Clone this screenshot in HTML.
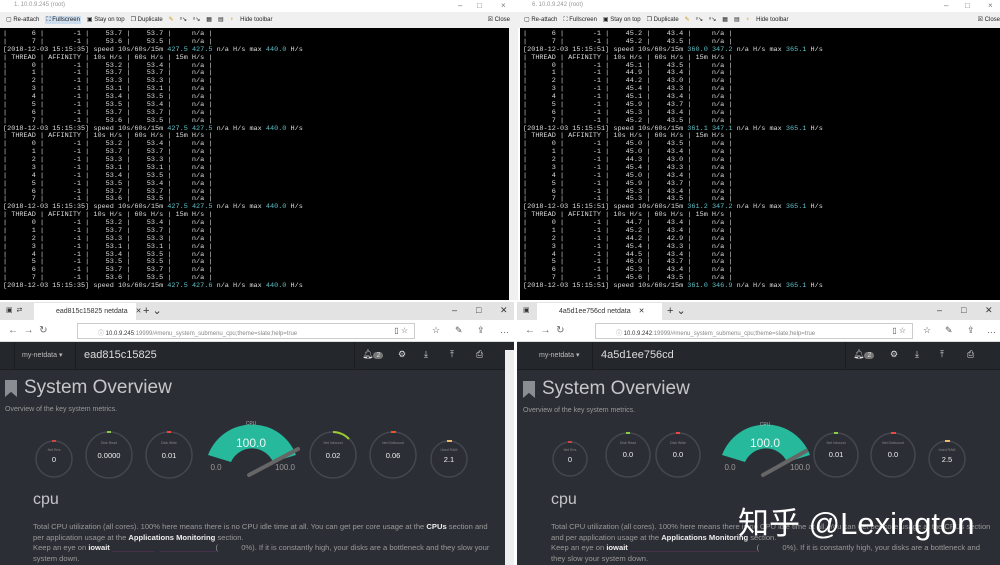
<!DOCTYPE html>
<html><head><meta charset="utf-8">
<style>
*{margin:0;padding:0;box-sizing:border-box}
body{width:1000px;height:565px;overflow:hidden;background:#fff;position:relative;font-family:"Liberation Sans",sans-serif}
.abs{position:absolute}
.title{height:12px;background:#fff;font-size:6px;color:#999;padding:2px 0 0 14px;position:relative;white-space:nowrap}
.wc{position:absolute;top:1px;font-size:8px;color:#777;white-space:nowrap}
.tb{height:16px;background:#f0f0f0;font-size:6px;color:#222;white-space:nowrap;padding-top:4px;position:relative}
.tb span{margin-left:6px}
.term{background:#000;overflow:hidden}
.term pre{font-family:"Liberation Mono",monospace;font-size:6.85px;line-height:7.875px;color:#dcdcdc;padding:3px 0 0 3px}
.c{color:#5fc0c8}
.sb{background:#f0f0f0}
.tabs{height:18px;background:#e3e3e3;font-size:7px;color:#333;white-space:nowrap}
.tab{position:absolute;top:1px;height:17px;background:#fff;padding:4px 0 0 22px;white-space:nowrap}
.addr{height:22px;background:#fff;border-bottom:1px solid #ddd;font-size:6px;color:#888;white-space:nowrap}
.url{position:absolute;top:3px;height:16px;border:1px solid #ccc;padding:4px 0 0 20px;white-space:nowrap}
.url b{color:#333;font-weight:normal}
.nav{height:28px;background:#24272c;border-bottom:1px solid #1a1c20;color:#ddd;white-space:nowrap}
h1{font-weight:normal;color:#c4c6ca;font-size:19px;position:absolute;white-space:nowrap}
.bm{position:absolute;width:12px;height:17px;background:#8a8d92;clip-path:polygon(0 0,100% 0,100% 100%,50% 70%,0 100%)}
.sub{position:absolute;font-size:7px;color:#999;white-space:nowrap}
.cpu{position:absolute;font-size:16px;color:#c4c6ca}
.p{position:absolute;font-size:7.6px;line-height:10.5px;color:#999}
.p b{color:#eee}
.wm{position:absolute;left:738px;top:498px;font-size:31px;color:#fff;font-family:"Liberation Sans","Noto Sans CJK SC",sans-serif;white-space:nowrap}
.ic{position:absolute;font-size:9px;color:#ddd}
</style></head><body>

<!-- LEFT TERMINAL -->
<div class="abs" style="left:0;top:0;width:518px;height:302px;background:#fff">
 <div class="title">1. 10.0.9.245 (root)<span class="wc" style="left:458px">–</span><span class="wc" style="left:477px">□</span><span class="wc" style="left:501px">×</span></div>
 <div class="tb"><span>▢ Re-attach</span><span style="background:#cde;padding:1px">⛶ Fullscreen</span><span>▣ Stay on top</span><span>❐ Duplicate</span><span style="color:#c90">✎</span><span>ᵒ↘</span><span>ᵒ↘</span><span>▦</span><span>▤</span><span style="color:#c90">♆</span><span>Hide toolbar</span><span style="position:absolute;right:8px;top:4px">☒ Close</span></div>
 <div class="term abs" style="left:0;top:28px;width:509px;height:272px"><pre>|      6 |       -1 |    53.7 |    53.7 |     n/a |
|      7 |       -1 |    53.6 |    53.5 |     n/a |
[2018-12-03 15:15:35] speed 10s/60s/15m <span class="c">427.5</span> <span class="c">427.5</span> n/a H/s max <span class="c">440.0</span> H/s
| THREAD | AFFINITY | 10s H/s | 60s H/s | 15m H/s |
|      0 |       -1 |    53.2 |    53.4 |     n/a |
|      1 |       -1 |    53.7 |    53.7 |     n/a |
|      2 |       -1 |    53.3 |    53.3 |     n/a |
|      3 |       -1 |    53.1 |    53.1 |     n/a |
|      4 |       -1 |    53.4 |    53.5 |     n/a |
|      5 |       -1 |    53.5 |    53.4 |     n/a |
|      6 |       -1 |    53.7 |    53.7 |     n/a |
|      7 |       -1 |    53.6 |    53.5 |     n/a |
[2018-12-03 15:15:35] speed 10s/60s/15m <span class="c">427.5</span> <span class="c">427.5</span> n/a H/s max <span class="c">440.0</span> H/s
| THREAD | AFFINITY | 10s H/s | 60s H/s | 15m H/s |
|      0 |       -1 |    53.2 |    53.4 |     n/a |
|      1 |       -1 |    53.7 |    53.7 |     n/a |
|      2 |       -1 |    53.3 |    53.3 |     n/a |
|      3 |       -1 |    53.1 |    53.1 |     n/a |
|      4 |       -1 |    53.4 |    53.5 |     n/a |
|      5 |       -1 |    53.5 |    53.4 |     n/a |
|      6 |       -1 |    53.7 |    53.7 |     n/a |
|      7 |       -1 |    53.6 |    53.5 |     n/a |
[2018-12-03 15:15:35] speed 10s/60s/15m <span class="c">427.5</span> <span class="c">427.5</span> n/a H/s max <span class="c">440.0</span> H/s
| THREAD | AFFINITY | 10s H/s | 60s H/s | 15m H/s |
|      0 |       -1 |    53.2 |    53.4 |     n/a |
|      1 |       -1 |    53.7 |    53.7 |     n/a |
|      2 |       -1 |    53.3 |    53.3 |     n/a |
|      3 |       -1 |    53.1 |    53.1 |     n/a |
|      4 |       -1 |    53.4 |    53.5 |     n/a |
|      5 |       -1 |    53.5 |    53.5 |     n/a |
|      6 |       -1 |    53.7 |    53.7 |     n/a |
|      7 |       -1 |    53.6 |    53.5 |     n/a |
[2018-12-03 15:15:35] speed 10s/60s/15m <span class="c">427.5</span> <span class="c">427.6</span> n/a H/s max <span class="c">440.0</span> H/s</pre></div>
 <div class="sb abs" style="left:509px;top:28px;width:9px;height:272px"></div>
</div>

<!-- RIGHT TERMINAL -->
<div class="abs" style="left:518px;top:0;width:482px;height:302px;background:#fff">
 <div class="title">6. 10.0.9.242 (root)<span class="wc" style="left:426px">–</span><span class="wc" style="left:447px">□</span><span class="wc" style="left:470px">×</span></div>
 <div class="tb"><span>▢ Re-attach</span><span>⛶ Fullscreen</span><span>▣ Stay on top</span><span>❐ Duplicate</span><span style="color:#c90">✎</span><span>ᵒ↘</span><span>ᵒ↘</span><span>▦</span><span>▤</span><span style="color:#c90">♆</span><span>Hide toolbar</span><span style="position:absolute;right:0;top:4px">☒ Close</span></div>
 <div class="term abs" style="left:2px;top:28px;width:480px;height:272px"><pre>|      6 |       -1 |    45.2 |    43.4 |     n/a |
|      7 |       -1 |    45.2 |    43.5 |     n/a |
[2018-12-03 15:15:51] speed 10s/60s/15m <span class="c">360.0</span> <span class="c">347.2</span> n/a H/s max <span class="c">365.1</span> H/s
| THREAD | AFFINITY | 10s H/s | 60s H/s | 15m H/s |
|      0 |       -1 |    45.1 |    43.5 |     n/a |
|      1 |       -1 |    44.9 |    43.4 |     n/a |
|      2 |       -1 |    44.2 |    43.0 |     n/a |
|      3 |       -1 |    45.4 |    43.3 |     n/a |
|      4 |       -1 |    45.1 |    43.4 |     n/a |
|      5 |       -1 |    45.9 |    43.7 |     n/a |
|      6 |       -1 |    45.3 |    43.4 |     n/a |
|      7 |       -1 |    45.2 |    43.5 |     n/a |
[2018-12-03 15:15:51] speed 10s/60s/15m <span class="c">361.1</span> <span class="c">347.1</span> n/a H/s max <span class="c">365.1</span> H/s
| THREAD | AFFINITY | 10s H/s | 60s H/s | 15m H/s |
|      0 |       -1 |    45.0 |    43.5 |     n/a |
|      1 |       -1 |    45.0 |    43.4 |     n/a |
|      2 |       -1 |    44.3 |    43.0 |     n/a |
|      3 |       -1 |    45.4 |    43.3 |     n/a |
|      4 |       -1 |    45.0 |    43.4 |     n/a |
|      5 |       -1 |    45.9 |    43.7 |     n/a |
|      6 |       -1 |    45.3 |    43.4 |     n/a |
|      7 |       -1 |    45.3 |    43.5 |     n/a |
[2018-12-03 15:15:51] speed 10s/60s/15m <span class="c">361.2</span> <span class="c">347.2</span> n/a H/s max <span class="c">365.1</span> H/s
| THREAD | AFFINITY | 10s H/s | 60s H/s | 15m H/s |
|      0 |       -1 |    44.7 |    43.4 |     n/a |
|      1 |       -1 |    45.2 |    43.4 |     n/a |
|      2 |       -1 |    44.2 |    42.9 |     n/a |
|      3 |       -1 |    45.4 |    43.3 |     n/a |
|      4 |       -1 |    44.5 |    43.4 |     n/a |
|      5 |       -1 |    46.0 |    43.7 |     n/a |
|      6 |       -1 |    45.3 |    43.4 |     n/a |
|      7 |       -1 |    45.6 |    43.5 |     n/a |
[2018-12-03 15:15:51] speed 10s/60s/15m <span class="c">361.0</span> <span class="c">346.9</span> n/a H/s max <span class="c">365.1</span> H/s</pre></div>
</div>

<!-- LEFT BROWSER -->
<div class="abs" style="left:0;top:302px;width:514px;height:263px;background:#2b2e34;overflow:hidden">
 <div class="tabs" style="position:relative"><span class="abs" style="left:6px;top:4px">▣ &nbsp;⇄</span><div class="tab" style="left:34px;width:102px">ead815c15825 netdata <span style="margin-left:6px">✕</span></div><span class="abs" style="left:143px;top:2px;font-size:11px">+ ⌄</span><span class="abs" style="left:452px;top:3px;font-size:9px">–</span><span class="abs" style="left:476px;top:3px;font-size:9px">□</span><span class="abs" style="left:500px;top:3px;font-size:9px">✕</span></div>
 <div class="addr" style="position:relative"><span class="abs" style="left:8px;top:5px;font-size:10px;color:#666">←&nbsp; → &nbsp;↻</span><div class="url" style="left:77px;width:338px">ⓘ <b>10.0.9.245</b>:19999/#menu_system_submenu_cpu;theme=slate;help=true<span class="abs" style="right:6px;top:2px;font-size:8px;color:#555">▯ ☆</span></div><span class="abs" style="left:432px;top:5px;font-size:9px;color:#555">☆</span><span class="abs" style="left:455px;top:5px;font-size:9px;color:#555">✎</span><span class="abs" style="left:477px;top:5px;font-size:9px;color:#555">⇪</span><span class="abs" style="left:500px;top:5px;font-size:9px;color:#555">…</span></div>
 <div class="nav" style="position:relative"><div class="abs" style="left:14px;top:0;width:1px;height:28px;background:#1a1c20"></div><span class="abs" style="left:22px;top:9px;font-size:7px;color:#bbb">my-netdata ▾</span><div class="abs" style="left:75px;top:0;width:1px;height:28px;background:#1a1c20"></div><span class="abs" style="left:84px;top:7px;font-size:11px;color:#ddd">ead815c15825</span><div class="abs" style="left:354px;width:1px;height:28px;background:#1a1c20"></div><span class="abs" style="left:362px;top:7px;font-size:9px">🔔︎<span style="background:#777;border-radius:6px;padding:0 3px;font-size:7px">2</span></span><span class="ic" style="left:398px;top:7px">⚙</span><span class="ic" style="left:424px;top:7px">⤓</span><span class="ic" style="left:450px;top:7px">⤒</span><span class="ic" style="left:476px;top:7px">⎙</span></div>
 <div class="bm" style="left:5px;top:78px"></div><h1 style="left:24px;top:75px">System Overview</h1>
 <div class="sub" style="left:5px;top:104px">Overview of the key system metrics.</div>
 <div class="cpu" style="left:33px;top:189px">cpu</div>
 <div class="p" style="left:33px;top:220px;width:465px">Total CPU utilization (all cores). 100% here means there is no CPU idle time at all. You can get per core usage at the <b>CPUs</b> section and per application usage at the <b>Applications Monitoring</b> section.<br>Keep an eye on <b>iowait</b> <span style="color:#636">__________</span> &nbsp; <span style="color:#636">_____________</span>( &nbsp; &nbsp; &nbsp; &nbsp; &nbsp; 0%). If it is constantly high, your disks are a bottleneck and they slow your system down.</div>
 <div class="abs" style="left:505px;top:48px;width:9px;height:215px;background:#eee"></div>
</div>

<!-- RIGHT BROWSER -->
<div class="abs" style="left:517px;top:302px;width:483px;height:263px;background:#2b2e34;overflow:hidden">
 <div class="tabs" style="position:relative"><span class="abs" style="left:6px;top:4px">▣</span><div class="tab" style="left:20px;width:125px">4a5d1ee756cd netdata <span style="margin-left:6px">✕</span></div><span class="abs" style="left:150px;top:2px;font-size:11px">+ ⌄</span><span class="abs" style="left:420px;top:3px;font-size:9px">–</span><span class="abs" style="left:444px;top:3px;font-size:9px">□</span><span class="abs" style="left:468px;top:3px;font-size:9px">✕</span></div>
 <div class="addr" style="position:relative"><span class="abs" style="left:8px;top:5px;font-size:10px;color:#666">← &nbsp;→ &nbsp;↻</span><div class="url" style="left:78px;width:318px">ⓘ <b>10.0.9.242</b>:19999/#menu_system_submenu_cpu;theme=slate;help=true<span class="abs" style="right:6px;top:2px;font-size:8px;color:#555">▯ ☆</span></div><span class="abs" style="left:406px;top:5px;font-size:9px;color:#555">☆</span><span class="abs" style="left:428px;top:5px;font-size:9px;color:#555">✎</span><span class="abs" style="left:450px;top:5px;font-size:9px;color:#555">⇪</span><span class="abs" style="left:470px;top:5px;font-size:9px;color:#555">…</span></div>
 <div class="nav" style="position:relative"><span class="abs" style="left:22px;top:9px;font-size:7px;color:#bbb">my-netdata ▾</span><div class="abs" style="left:75px;top:0;width:1px;height:28px;background:#1a1c20"></div><span class="abs" style="left:84px;top:7px;font-size:11px;color:#ddd">4a5d1ee756cd</span><div class="abs" style="left:328px;width:1px;height:28px;background:#1a1c20"></div><span class="abs" style="left:336px;top:7px;font-size:9px">🔔︎<span style="background:#777;border-radius:6px;padding:0 3px;font-size:7px">2</span></span><span class="ic" style="left:373px;top:7px">⚙</span><span class="ic" style="left:398px;top:7px">⤓</span><span class="ic" style="left:423px;top:7px">⤒</span><span class="ic" style="left:450px;top:7px">⎙</span></div>
 <div class="bm" style="left:6px;top:79px"></div><h1 style="left:25px;top:76px">System Overview</h1>
 <div class="sub" style="left:6px;top:105px">Overview of the key system metrics.</div>
 <div class="cpu" style="left:34px;top:189px">cpu</div>
 <div class="p" style="left:34px;top:220px;width:440px">Total CPU utilization (all cores). 100% here means there is no CPU idle time at all. You can get per core usage at the CPUs section and per application usage at the <b>Applications Monitoring</b> section.<br>Keep an eye on <b>iowait</b> <span style="color:#636">______________________________</span>( &nbsp; &nbsp; &nbsp; &nbsp; &nbsp; 0%). If it is constantly high, your disks are a bottleneck and they slow your system down.</div>
</div>

<!-- GAUGES -->
<svg class="abs" style="left:0;top:0" width="1000" height="565" font-family="Liberation Sans" text-anchor="middle">
 <g fill="none" stroke="#44474d" stroke-width="1.5">
  <circle cx="54" cy="459" r="18"/><circle cx="109" cy="455" r="23"/><circle cx="169" cy="455" r="23"/>
  <circle cx="333" cy="455" r="23"/><circle cx="393" cy="455" r="23"/><circle cx="449" cy="459" r="18"/>
  <circle cx="570" cy="459" r="17"/><circle cx="628" cy="455" r="22"/><circle cx="678" cy="455" r="22"/>
  <circle cx="836" cy="455" r="22"/><circle cx="893" cy="455" r="22"/><circle cx="947" cy="459" r="18"/>
 </g>
 <g stroke-width="2" fill="none">
  <path d="M52 441h4" stroke="#c44"/><path d="M107 432h4" stroke="#8c4"/><path d="M167 432h4" stroke="#e44"/>
  <path d="M333 432 A23 23 0 0 1 349 439" stroke="#9c3"/><path d="M391 432h5" stroke="#e52"/><path d="M447 441h5" stroke="#eb6"/>
  <path d="M568 442h4" stroke="#c44"/><path d="M626 433h4" stroke="#8c4"/><path d="M676 433h4" stroke="#e44"/>
  <path d="M834 433h4" stroke="#8c4"/><path d="M891 433h5" stroke="#e44"/><path d="M945 441h5" stroke="#eb6"/>
 </g>
 <g fill="#eee" font-size="7.5">
  <text x="54" y="462">0</text><text x="109" y="458">0.0000</text><text x="169" y="458">0.01</text>
  <text x="333" y="458">0.02</text><text x="393" y="458">0.06</text><text x="449" y="462">2.1</text>
  <text x="570" y="462">0</text><text x="628" y="457">0.0</text><text x="678" y="457">0.0</text>
  <text x="836" y="457">0.01</text><text x="893" y="457">0.0</text><text x="947" y="462">2.5</text>
 </g>
 <g fill="#888" font-size="3.5">
  <text x="54" y="451">Net Errs</text><text x="109" y="444">Disk Read</text><text x="169" y="444">Disk Write</text>
  <text x="333" y="444">Net Inbound</text><text x="393" y="444">Net Outbound</text><text x="449" y="451">Used RAM</text>
  <text x="570" y="451">Net Errs</text><text x="628" y="444">Disk Read</text><text x="678" y="444">Disk Write</text>
  <text x="836" y="444">Net Inbound</text><text x="893" y="444">Net Outbound</text><text x="947" y="451">Used RAM</text>
 </g>
 <path d="M208 455 A47 47 0 0 1 296 455 L273 462 A23 23 0 0 0 231 462 Z" fill="#26b99c"/>
 <path d="M249 475 L298 449" stroke="#666" stroke-width="4" stroke-linecap="round"/>
 <text x="251" y="447" fill="#e8f8f4" font-size="12">100.0</text>
 <text x="251" y="425" fill="#aaa" font-size="5">CPU</text>
 <text x="216" y="470" fill="#999" font-size="8">0.0</text><text x="285" y="470" fill="#999" font-size="8">100.0</text>
 <path d="M722 455 A47 47 0 0 1 810 455 L787 462 A23 23 0 0 0 745 462 Z" fill="#26b99c"/>
 <path d="M763 475 L806 451" stroke="#666" stroke-width="4" stroke-linecap="round"/>
 <text x="765" y="447" fill="#e8f8f4" font-size="12">100.0</text>
 <text x="765" y="426" fill="#aaa" font-size="5">CPU</text>
 <text x="730" y="470" fill="#999" font-size="8">0.0</text><text x="800" y="470" fill="#999" font-size="8">100.0</text>
</svg>

<div class="wm">知乎 @Lexington</div>
</body></html>
